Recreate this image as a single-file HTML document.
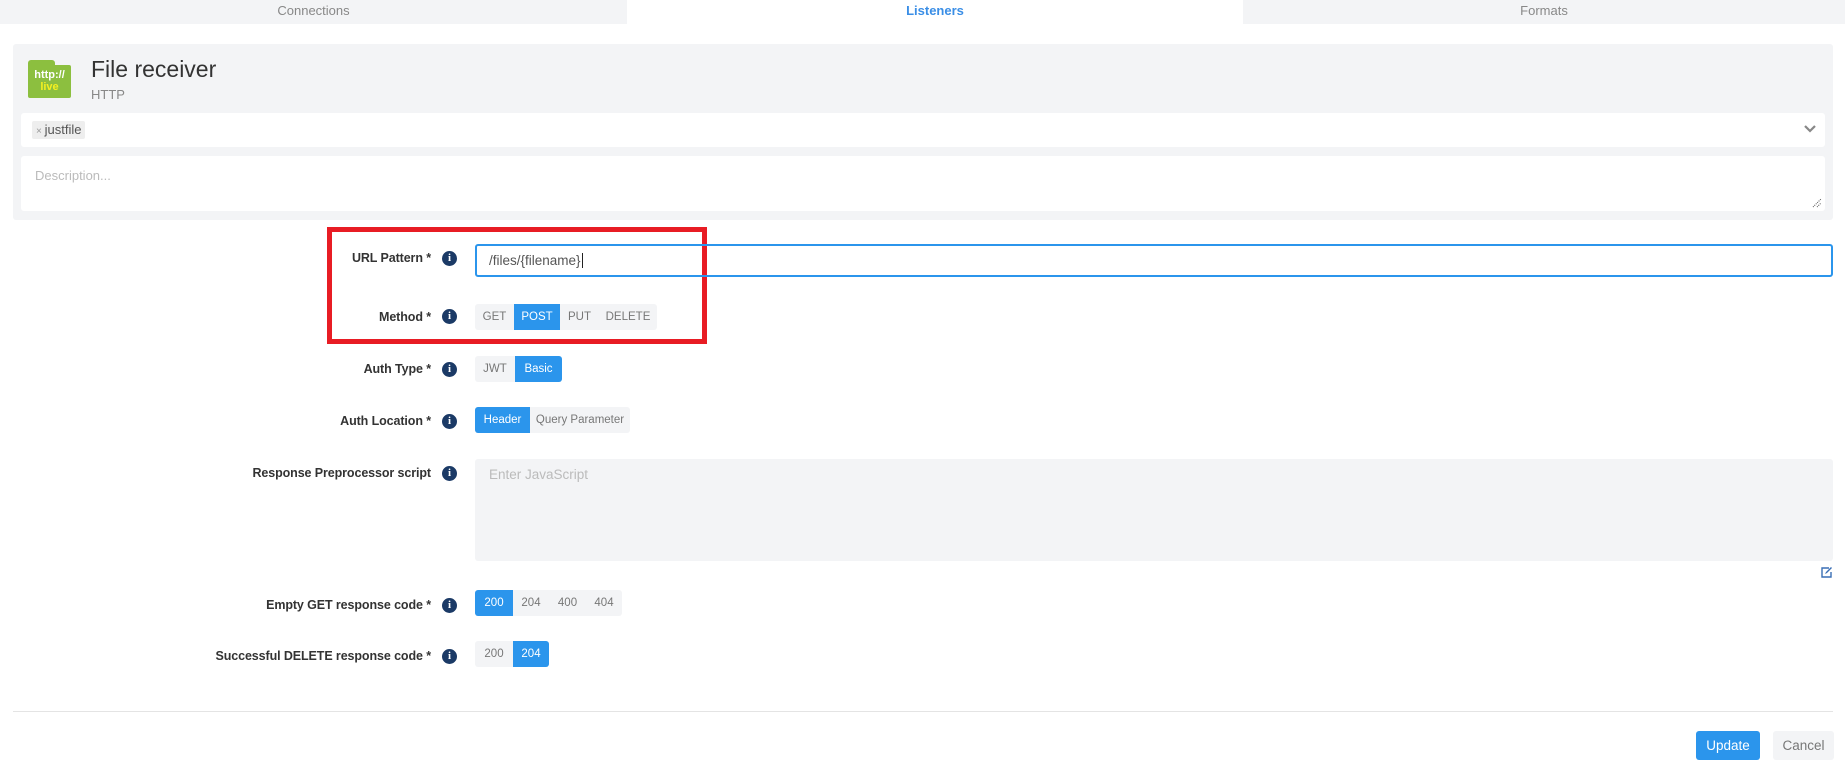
<!DOCTYPE html>
<html><head><meta charset="utf-8"><style>
*{box-sizing:border-box;margin:0;padding:0}
body{width:1845px;height:765px;background:#fff;font-family:"Liberation Sans",sans-serif;position:relative;overflow:hidden;color:#333}
.abs{position:absolute}
.tab{position:absolute;top:0;height:24px;line-height:22px;text-align:center;font-size:13px;color:#888;background:#f3f4f6}
.lbl{position:absolute;right:1414px;font-size:12.5px;font-weight:bold;color:#333;text-align:right;white-space:nowrap;letter-spacing:-0.1px}
.info{position:absolute;left:442px;width:15px;height:15px;border-radius:50%;background:#1b3a66;color:#fff;font-size:11px;font-weight:bold;text-align:center;line-height:15px;font-family:"Liberation Serif",serif}
.grp{position:absolute;left:475px;display:flex;height:26px;background:#f3f4f6;border-radius:3px;overflow:hidden}
.grp span{display:block;height:26px;line-height:26px;font-size:11.5px;color:#777;text-align:center}
.grp span.on{background:#2b95ec;color:#fff}
</style></head><body>
<div class="tab" style="left:0;width:627px">Connections</div>
<div class="tab" style="left:627px;width:616px;background:#fff;color:#3a8ee6;font-weight:bold">Listeners</div>
<div class="tab" style="left:1243px;width:602px">Formats</div>

<div class="abs" style="left:13px;top:44px;width:1820px;height:176px;background:#f3f4f6;border-radius:3px"></div>
<div class="abs" style="left:28px;top:60px;width:27px;height:9px;background:#8cbf3f;border-radius:3px 3px 0 0"></div>
<div class="abs" style="left:28px;top:65px;width:43px;height:33px;background:#8cbf3f;border-radius:2px;text-align:center;font-weight:bold;font-size:11px;line-height:12px;padding-top:4px;color:#fff">http://<br><span style="color:#f4f020">live</span></div>
<div class="abs" style="left:91px;top:56px;font-size:23px;color:#333">File receiver</div>
<div class="abs" style="left:91px;top:87px;font-size:13px;color:#888">HTTP</div>
<div class="abs" style="left:21px;top:113px;width:1804px;height:34px;background:#fff;border-radius:3px"></div>
<div class="abs" style="left:32px;top:121px;height:18px;padding:0 4px;background:#eee;border-radius:2px;font-size:13px;line-height:18px;color:#555"><span style="font-size:10px;color:#999">× </span>justfile</div>
<svg class="abs" style="left:1803px;top:124px" width="14" height="10" viewBox="0 0 14 10"><path d="M2 2l5 5 5-5" stroke="#888" stroke-width="2.2" fill="none"/></svg>
<div class="abs" style="left:21px;top:156px;width:1804px;height:55px;background:#fff;border-radius:3px"></div>
<div class="abs" style="left:35px;top:168px;font-size:13px;color:#bbb">Description...</div>
<svg class="abs" style="left:1812px;top:198px" width="10" height="10"><path d="M1 9L9 1M5 9L9 5" stroke="#555" stroke-width="1" stroke-dasharray="1 1"/></svg>

<div class="abs" style="left:327px;top:227px;width:380px;height:117px;border:5px solid #e81c24"></div>

<div class="lbl" style="top:251px">URL Pattern *</div><div class="info" style="top:251px">i</div>
<div class="abs" style="left:475px;top:244px;width:1358px;height:33px;border:2px solid #2b95ec;border-radius:3px;font-size:13.5px;color:#555;padding:7px 12px">/files/{filename}<span style="border-left:1px solid #222;margin-left:1px"></span></div>

<div class="lbl" style="top:310px">Method *</div><div class="info" style="top:309px">i</div>
<div class="grp" style="top:304px"><span style="width:39px">GET</span><span class="on" style="width:46px">POST</span><span style="width:39px">PUT</span><span style="width:58px">DELETE</span></div>

<div class="lbl" style="top:362px">Auth Type *</div><div class="info" style="top:362px">i</div>
<div class="grp" style="top:356px"><span style="width:40px">JWT</span><span class="on" style="width:47px">Basic</span></div>

<div class="lbl" style="top:414px">Auth Location *</div><div class="info" style="top:414px">i</div>
<div class="grp" style="top:407px"><span class="on" style="width:55px">Header</span><span style="width:100px">Query Parameter</span></div>

<div class="lbl" style="top:466px">Response Preprocessor script</div><div class="info" style="top:466px">i</div>
<div class="abs" style="left:475px;top:459px;width:1358px;height:102px;background:#f3f4f6;border-radius:3px;font-size:13.5px;color:#bbb;padding:8px 14px">Enter JavaScript</div>
<svg class="abs" style="left:1820px;top:566px" width="13" height="13" viewBox="0 0 13 13"><path d="M9 2H2v9h9V6" stroke="#3a6fb5" stroke-width="1.4" fill="none"/><path d="M5 8l1-2 5-5 1 1-5 5z" fill="#3a6fb5"/></svg>

<div class="lbl" style="top:598px">Empty GET response code *</div><div class="info" style="top:598px">i</div>
<div class="grp" style="top:590px"><span class="on" style="width:38px">200</span><span style="width:36px">204</span><span style="width:37px">400</span><span style="width:36px">404</span></div>

<div class="lbl" style="top:649px">Successful DELETE response code *</div><div class="info" style="top:649px">i</div>
<div class="grp" style="top:641px"><span style="width:38px">200</span><span class="on" style="width:36px">204</span></div>

<div class="abs" style="left:13px;top:711px;width:1820px;height:1px;background:#e4e4e4"></div>
<div class="abs" style="left:1696px;top:731px;width:64px;height:29px;background:#2b95ec;border-radius:3px;color:#fff;font-size:13.5px;text-align:center;line-height:29px">Update</div>
<div class="abs" style="left:1773px;top:731px;width:61px;height:29px;background:#f3f4f6;border-radius:3px;color:#777;font-size:13.5px;text-align:center;line-height:29px">Cancel</div>
</body></html>
